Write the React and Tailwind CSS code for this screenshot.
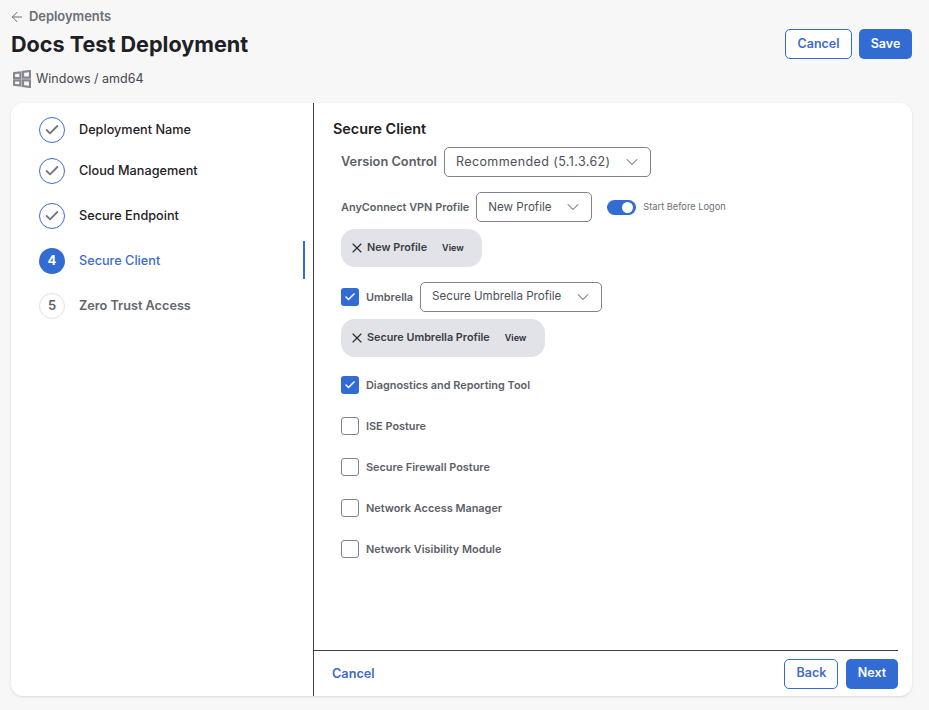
import React from 'react';
import { ArrowLeft, Check, ChevronDown, X } from 'lucide-react';

const steps = [
  { label: 'Deployment Name', state: 'done', h: 'h-[37px]' },
  { label: 'Cloud Management', state: 'done', h: 'h-[45px]' },
  { label: 'Secure Endpoint', state: 'done', h: 'h-[45px]' },
  { label: 'Secure Client', state: 'active', n: 4, h: 'h-[45px]' },
  { label: 'Zero Trust Access', state: 'todo', n: 5, h: 'h-[45px]' },
];

const StepBadge = ({ step }) => {
  if (step.state === 'done') {
    return (
      <span className="flex h-[26px] w-[26px] shrink-0 items-center justify-center rounded-full border border-[#3a6fd0] bg-white">
        <Check className="h-[16px] w-[16px] text-[#73767e]" strokeWidth={2.75} />
      </span>
    );
  }
  if (step.state === 'active') {
    return (
      <span className="flex h-[26px] w-[26px] shrink-0 items-center justify-center rounded-full bg-[#326bd2] text-[13px] font-bold text-white">
        {step.n}
      </span>
    );
  }
  return (
    <span className="flex h-[26px] w-[26px] shrink-0 items-center justify-center rounded-full border border-[#dfe1e6] bg-white text-[13px] font-semibold text-[#5c5f68]">
      {step.n}
    </span>
  );
};

const Select = ({ label, className, textClass }) => (
  <div className={`flex h-[30px] items-center justify-between rounded-[5px] border border-[#7f838c] bg-white pl-[11px] pr-[8px] text-[#4d5059] ${className}`}>
    <span className={textClass}>{label}</span>
    <ChevronDown className="h-[20px] w-[20px] text-[#71747c]" strokeWidth={1.25} />
  </div>
);

const Pill = ({ label, className }) => (
  <div className={`flex h-[38px] items-center rounded-[14px] bg-[#e1e3e8] pl-[8px] text-[#3a3d45] ${className}`}>
    <X className="mr-[2px] h-[16px] w-[16px] text-[#2b2d33]" strokeWidth={1.75} />
    <span className="text-[10.8px] font-semibold">{label}</span>
    <span className="ml-[15px] text-[9px] font-semibold text-[#2b2d33]">View</span>
  </div>
);

const CheckBox = ({ checked }) =>
  checked ? (
    <span className="flex h-[18px] w-[18px] shrink-0 items-center justify-center rounded-[3px] bg-[#326bd2]">
      <Check className="h-[12px] w-[12px] text-white" strokeWidth={3} />
    </span>
  ) : (
    <span className="h-[18px] w-[18px] shrink-0 rounded-[3px] border border-[#7f838c] bg-white" />
  );

const Option = ({ label, checked, className }) => (
  <div className={`flex h-[18px] items-center gap-[7px] ${className}`}>
    <CheckBox checked={checked} />
    <span className="text-[10.9px] font-semibold text-[#5c5f68]">{label}</span>
  </div>
);

const App = () => {
  return (
    <div className="h-[710px] w-[929px] overflow-hidden bg-[#f7f7f7] font-['Inter',sans-serif]">
      {/* Header */}
      <div className="flex h-[103px] items-start justify-between pl-[11px] pr-[17px]">
        <div>
          <div className="mt-[10px] flex h-[14px] items-center text-[12.9px] font-semibold text-[#6b6e76]">
            <ArrowLeft className="-ml-[2px] mr-[4px] h-[16px] w-[16px]" strokeWidth={1.5} />
            Deployments
          </div>
          <h1 className="mt-[4px] text-[21.6px] leading-[32px] font-bold text-[#1f2025]">Docs Test Deployment</h1>
          <div className="mt-[10px] flex items-center gap-[5px] pl-[2px] text-[12.5px] text-[#44474f]">
            <svg viewBox="0 0 18 18" className="h-[18px] w-[18px]" fill="none" stroke="#85888f" strokeWidth="2.2">
              <path d="M1 3.2 L7.4 2.4 V8 H1 Z" />
              <path d="M10 1.8 L17 1 V7.6 H10 Z" />
              <path d="M1 10.4 H7.4 V15.6 L1 14.8 Z" />
              <path d="M10 10.4 H17 V17 L10 16 Z" />
            </svg>
            Windows / amd64
          </div>
        </div>
        <div className="mt-[29px] flex gap-[7px]">
          <button className="h-[30px] w-[67px] rounded-[5px] border border-[#326bd2] bg-white text-[12.5px] font-semibold text-[#3f6cc9]">Cancel</button>
          <button className="h-[30px] w-[53px] rounded-[5px] bg-[#326bd2] text-[12.5px] font-semibold text-white">Save</button>
        </div>
      </div>

      {/* Card */}
      <div className="ml-[11px] flex h-[593px] w-[901px] rounded-[12px] bg-white shadow-sm">
        {/* Steps */}
        <div className="relative h-full w-[303px] shrink-0 border-r border-[#3f4148] pl-[28px] pt-[8px]">
          {steps.map((step) => (
            <div key={step.label} className={`flex items-center gap-[14px] ${step.h}`}>
              <StepBadge step={step} />
              <span
                className={`text-[12.7px] font-medium ${
                  step.state === 'active'
                    ? 'text-[#3f6cc9]'
                    : step.state === 'todo'
                      ? 'font-semibold text-[#63666e]'
                      : 'text-[#1f2025]'
                }`}
              >
                {step.label}
              </span>
            </div>
          ))}
          <span className="absolute right-[8px] top-[138px] h-[38px] w-[2px] bg-[#326bd2]" />
        </div>

        {/* Secure Client form */}
        <div className="flex min-w-0 flex-1 flex-col pr-[14px]">
          <div className="flex-1 pl-[19px] pt-[17px]">
            <h2 className="text-[14.4px] leading-[17px] font-semibold text-[#1f2025]">Secure Client</h2>
            <div className="pl-[8px]">
              <div className="mt-[10px] flex items-center gap-[7px]">
                <span className="text-[12.8px] font-semibold text-[#5c5f68]">Version Control</span>
                <Select label="Recommended (5.1.3.62)" className="w-[207px]" textClass="text-[12.5px] tracking-[0.4px]" />
              </div>
              <div className="mt-[15px] flex items-center">
                <span className="text-[10.9px] font-semibold text-[#5c5f68]">AnyConnect VPN Profile</span>
                <Select label="New Profile" className="ml-[7px] w-[116px]" textClass="pt-[1px] text-[11.6px]" />
                <span className="relative ml-[15px] h-[15px] w-[29px] rounded-full bg-[#326bd2]">
                  <span className="absolute right-[3px] top-[2px] h-[11px] w-[11px] rounded-full bg-white" />
                </span>
                <span className="ml-[7px] text-[9.25px] text-[#6b6e76]">Start Before Logon</span>
              </div>
              <Pill label="New Profile" className="mt-[7px] w-[141px]" />
              <div className="mt-[15px] flex items-center gap-[7px]">
                <CheckBox checked />
                <span className="text-[10.9px] font-semibold text-[#5c5f68]">Umbrella</span>
                <Select label="Secure Umbrella Profile" className="w-[182px]" textClass="text-[11.6px]" />
              </div>
              <Pill label="Secure Umbrella Profile" className="mt-[7px] w-[204px]" />
              <Option label="Diagnostics and Reporting Tool" checked className="mt-[19px]" />
              <Option label="ISE Posture" className="mt-[23px]" />
              <Option label="Secure Firewall Posture" className="mt-[23px]" />
              <Option label="Network Access Manager" className="mt-[23px]" />
              <Option label="Network Visibility Module" className="mt-[23px]" />
            </div>
          </div>
          <div className="flex h-[46px] items-center justify-between border-t border-[#3f4148] pl-[18px]">
            <span className="text-[12.7px] font-semibold text-[#3f6cc9]">Cancel</span>
            <div className="flex gap-[8px]">
              <button className="h-[30px] w-[54px] rounded-[5px] border border-[#326bd2] bg-white pl-[1px] text-[12.5px] font-semibold text-[#3f6cc9]">Back</button>
              <button className="h-[30px] w-[52px] rounded-[5px] bg-[#326bd2] text-[12.5px] font-semibold text-white">Next</button>
            </div>
          </div>
        </div>
      </div>
    </div>
  );
};

export default App;
